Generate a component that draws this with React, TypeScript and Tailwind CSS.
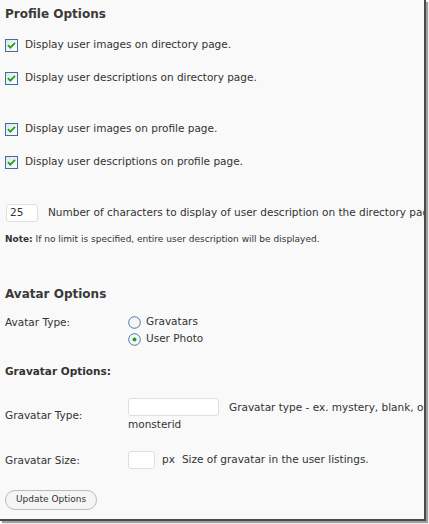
import React from 'react';

const font = { fontFamily: '"DejaVu Sans", Verdana, sans-serif' };

const Check = () => (
  <svg width="13" height="13" viewBox="0 0 13 13" className="shrink-0">
    <defs>
      <linearGradient id="cbg" x1="0" y1="0" x2="1" y2="1">
        <stop offset="0" stopColor="#dde3ea" />
        <stop offset="1" stopColor="#ffffff" />
      </linearGradient>
    </defs>
    <rect x="0.5" y="0.5" width="12" height="12" fill="url(#cbg)" stroke="#3f6f9f" />
    <path d="M3 6.2 L5.3 8.6 L10 3.8" fill="none" stroke="#21a121" strokeWidth="1.8" />
  </svg>
);

const Radio = ({ on }: { on?: boolean }) => (
  <svg width="13" height="13" viewBox="0 0 13 13" className="shrink-0">
    <circle cx="6.5" cy="6.5" r="5.8" fill="#f4f6f8" stroke="#4f78a3" />
    {on && <circle cx="6.5" cy="6.5" r="2" fill="#21a121" />}
  </svg>
);

const CheckRow = ({ label, className = '' }: { label: string; className?: string }) => (
  <div className={`flex items-center gap-[7px] pl-[5px] h-[16px] ${className}`}>
    <Check />
    <span>{label}</span>
  </div>
);

export default function App() {
  return (
    <div className="w-[429px] h-[524px] bg-white" style={font}>
      <div className="w-[426px] h-[521px] bg-[#f9f9f9] border-r-2 border-b-2 border-[#4a4a4a] shadow-[2px_2px_1px_#a0a0a0] overflow-hidden text-[10.5px] text-[#333]">
        <h2 className="pl-[5px] pt-[6px] text-[12px] font-bold text-[#3a3a3a] leading-[16px]">Profile Options</h2>

        <CheckRow label="Display user images on directory page." className="mt-[15px]" />
        <CheckRow label="Display user descriptions on directory page." className="mt-[17px]" />
        <CheckRow label="Display user images on profile page." className="mt-[35px]" />
        <CheckRow label="Display user descriptions on profile page." className="mt-[17px]" />

        {/* panel edge cuts the long labels, as in the original */}
        <div className="flex items-center mt-[34px] pl-[6px] whitespace-nowrap">
          <div className="shrink-0 w-[32px] h-[18px] bg-white border border-[#dfdfdf] rounded-[3px] flex items-center pl-[3px]">25</div>
          <span className="ml-[10px]">Number of characters to display of user description on the directory page.</span>
        </div>
        <div className="mt-[11px] pl-[5px] text-[9px] leading-[12px] whitespace-nowrap">
          <b>Note:</b> If no limit is specified, entire user description will be displayed.
        </div>

        <h2 className="pl-[5px] mt-[41px] text-[12px] font-bold leading-[16px] text-[#3a3a3a]">Avatar Options</h2>

        <div className="grid grid-cols-[128px_1fr] mt-[12px]">
          <div className="pl-[5px] leading-[16px]">Avatar Type:</div>
          <div className="flex flex-col gap-[1px]">
            <label className="flex items-center gap-[5px] h-[16px]"><Radio />Gravatars</label>
            <label className="flex items-center gap-[5px] h-[16px]"><Radio on />User Photo</label>
          </div>
        </div>

        <div className="pl-[5px] mt-[16px] font-bold leading-[16px]">Gravatar Options:</div>

        <div className="grid grid-cols-[128px_1fr] mt-[19px]">
          <div className="pl-[5px] pt-[9px] leading-[16px]">Gravatar Type:</div>
          <div className="leading-[16px] whitespace-nowrap">
            <div className="flex items-center">
              <div className="shrink-0 w-[91px] h-[18px] bg-white border border-[#dfdfdf] rounded-[3px]" />
              <span className="ml-[10px]">Gravatar type - ex. mystery, blank, or identicon,</span>
            </div>
            <div>monsterid</div>
          </div>
        </div>

        <div className="grid grid-cols-[128px_1fr] mt-[18px]">
          <div className="pl-[5px] leading-[18px] pt-[1px]">Gravatar Size:</div>
          <div className="flex items-center whitespace-nowrap">
            <div className="shrink-0 w-[27px] h-[18px] bg-white border border-[#dfdfdf] rounded-[3px]" />
            <span className="ml-[7px]">px</span>
            <span className="ml-[7px]">Size of gravatar in the user listings.</span>
          </div>
        </div>

        <button className="ml-[5px] mt-[21px] h-[20px] px-[10px] rounded-full border border-[#bbb] bg-[#f5f5f5] text-[9px] text-[#333]">
          Update Options
        </button>
      </div>
    </div>
  );
}
